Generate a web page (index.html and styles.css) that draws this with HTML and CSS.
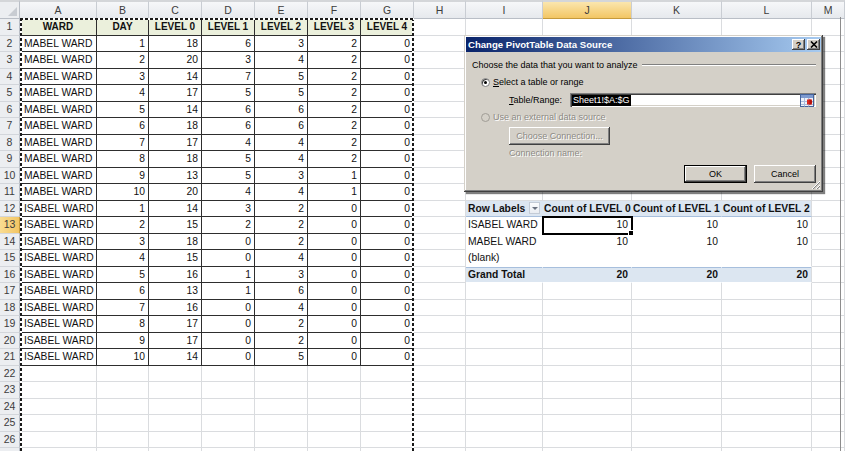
FILE: index.html
```html
<!DOCTYPE html>
<html lang="en">
<head>
    <meta charset="UTF-8">
    <title>Change PivotTable Data Source</title>
    <link rel="stylesheet" href="styles.css">
</head>
<body>
<div class="screen">
    <div class="sheet" id="sheet"></div>
    <div class="ants"></div>
    <div class="pane-edge"></div>

    <div class="dialog">
        <div class="titlebar">
            <span class="title">Change PivotTable Data Source</span>
            <span class="tb-btns">
                <span class="tb-btn">?</span>
                <span class="tb-btn">
                    <svg width="8" height="7" viewBox="0 0 8 7"><path d="M1 0.5l6 6M7 0.5l-6 6" stroke="#000" stroke-width="1.6"/></svg>
                </span>
            </span>
        </div>
        <div class="dlg-body">
            <div class="group-title"><span>Choose the data that you want to analyze</span><i class="groove"></i></div>
            <div class="radio"><span class="rb checked"></span><span><u>S</u>elect a table or range</span></div>
            <div class="range-row">
                <span class="range-label"><u>T</u>able/Range:</span>
                <div class="range-input">
                    <span class="hl">Sheet1!$A:$G</span>
                    <svg class="picker" width="14" height="13" viewBox="0 0 14 13">
                        <rect x="0.5" y="0.5" width="13" height="12" fill="#eef2fa" stroke="#44639c"/>
                        <rect x="1" y="1" width="12" height="3" fill="#7d9ad0"/>
                        <path d="M1 7.5h12M1 10.5h12M4.5 4v8.5M8.5 4v8.5" stroke="#a9bbdc"/>
                        <path d="M7 5.5h5v5h-5z" fill="#d9261f"/>
                        <path d="M9.5 4.5l3 3.5-3 3.5z" fill="#b3120d"/>
                    </svg>
                </div>
            </div>
            <div class="radio disabled"><span class="rb"></span><span>Use an external data source</span></div>
            <div class="btn btn-conn disabled">Choose Connection...</div>
            <div class="conn-name">Connection name:</div>
            <div class="actions">
                <div class="btn btn-default">OK</div>
                <div class="btn">Cancel</div>
            </div>
        </div>
        <svg class="grip" width="11" height="11" viewBox="0 0 11 11">
            <path d="M10 2L2 10M10 6L6 10M10 9L9 10" stroke="#fff" stroke-width="1"/>
            <path d="M10 3L3 10M10 7L7 10" stroke="#808080" stroke-width="1"/>
        </svg>
    </div>
</div>

<script>
    // sheet data, rows 2-21
    var cols = ['A','B','C','D','E','F','G','H','I','J','K','L','M'];
    var level0 = [18,20,14,17,14,18,17,18,13,20, 14,15,18,15,16,13,16,17,17,14];
    var level1 = [6,3,7,5,6,6,4,5,5,4, 3,2,0,0,1,1,0,0,0,0];
    var level2 = [3,4,5,5,6,6,4,4,3,4, 2,2,2,4,3,6,4,2,2,5];
    var level3 = [2,2,2,2,2,2,2,2,1,1, 0,0,0,0,0,0,0,0,0,0];

    // pivot table in I12:L16
    var pivot = {
        12: ['Row Labels', 'Count of LEVEL 0', 'Count of LEVEL 1', 'Count of LEVEL 2'],
        13: ['ISABEL WARD', 10, 10, 10],
        14: ['MABEL WARD', 10, 10, 10],
        15: ['(blank)', '', '', ''],
        16: ['Grand Total', 20, 20, 20]
    };

    var sheet = document.getElementById('sheet');

    function addCell(text, cls) {
        var el = document.createElement('div');
        el.className = cls;
        el.textContent = text;
        sheet.appendChild(el);
        return el;
    }

    function tableRow(r) {
        if (r === 1) return ['WARD', 'DAY', 'LEVEL 0', 'LEVEL 1', 'LEVEL 2', 'LEVEL 3', 'LEVEL 4'];
        var i = r - 2;
        return [i < 10 ? 'MABEL WARD' : 'ISABEL WARD', i % 10 + 1, level0[i], level1[i], level2[i], level3[i], 0];
    }

    addCell('', 'corner');
    cols.forEach(function (c) {
        addCell(c, c === 'J' ? 'col-head selected' : 'col-head');
    });

    // row 27 only peeks in at the bottom edge, so no number is drawn for it
    for (var r = 1; r <= 27; r++) {
        addCell(r < 27 ? r : '', r === 13 ? 'row-head selected' : 'row-head');
        var values = r <= 21 ? tableRow(r) : [];
        for (var c = 0; c < 13; c++) {
            var cls = 'cell';
            var text = '';
            if (c < 7 && r <= 21) {
                text = values[c];
                cls += r === 1 ? ' data head' : (c === 0 ? ' data' : ' data num');
            } else if (pivot[r] && c >= 8 && c <= 11) {
                text = pivot[r][c - 8];
                cls += ' pivot';
                if (r === 12) cls += ' pivot-head';
                else if (c > 8) cls += ' num';
                if (r === 16) cls += ' pivot-total';
            }
            var el = addCell(text, cls);
            if (r === 12 && c === 8) {
                el.className += ' row-labels';
                var btn = document.createElement('span');
                btn.className = 'filter-btn';
                el.appendChild(btn);
            }
            if (r === 13 && c === 9) el.className += ' active';
        }
    }
</script>
</body>
</html>
```

FILE: styles.css
```css
/* General */
body {
    margin: 0;
    background: #fff;
    font-family: "Liberation Sans", Arial, sans-serif;
    overflow: hidden;
}

.screen {
    position: relative;
    width: 845px;
    height: 451px;
    overflow: hidden;
}

/* Worksheet grid */
.sheet {
    display: grid;
    grid-template-columns: 20px 77px 52px 53px 53px 53px 53px 53px 52px 77px 89px 90px 90px 33px;
    grid-template-rows: 19px repeat(27, 16.5px);
}

.corner,
.col-head,
.row-head {
    box-sizing: border-box;
    color: #3c3c3c;
    font-size: 10.5px;
    text-align: center;
    background: #eceef1;
}

.corner {
    position: relative;
    border-right: 1px solid #b9bec6;
    border-bottom: 1px solid #b9bec6;
    border-top: 2px solid #d4d6d9;
}

.corner::after {
    content: "";
    position: absolute;
    right: 2px;
    bottom: 2px;
    border-left: 9px solid transparent;
    border-bottom: 9px solid #c8ccd2;
}

.col-head {
    border-top: 2px solid #d4d6d9;
    border-right: 1px solid #c9cdd3;
    border-bottom: 1px solid #b9bec6;
    line-height: 16px;
    background: linear-gradient(#f6f7f9, #e6e9ed);
}

.row-head {
    border-right: 1px solid #b9bec6;
    border-bottom: 1px solid #d3d6db;
    line-height: 15.5px;
}

.col-head.selected {
    background: linear-gradient(#fbe6ae, #f3c664);
    border-bottom-color: #c59a3c;
}

.row-head.selected {
    background: linear-gradient(90deg, #f9dc92, #f3c664);
    border-right-color: #c59a3c;
}

.cell {
    box-sizing: border-box;
    border-right: 1px solid #dadcdf;
    border-bottom: 1px solid #dadcdf;
    padding: 0 2px;
    font-size: 10.3px;
    line-height: 15.5px;
    color: #111;
    white-space: nowrap;
    overflow: hidden;
}

.cell.data {
    border-right-color: #2e2e2e;
    border-bottom-color: #2e2e2e;
    padding-left: 4px;
}

.cell.head {
    background: #ebf0dc;
    font-weight: bold;
    font-size: 10px;
    text-align: center;
    padding: 0;
}

.cell.num {
    text-align: right;
    padding-right: 3px;
}

/* Pivot table */
.cell.pivot {
    background: #fff;
    border-right-color: #fff;
    border-bottom-color: #fff;
    padding: 0 2px;
    overflow: visible;
}

.cell.pivot:nth-child(14n + 13) {
    border-right-color: #dadcdf;
}

.cell.pivot-head {
    background: #dce6f1;
    border-bottom-color: #a7bfdd;
    border-right-color: #dce6f1;
    font-weight: bold;
    font-size: 10.3px;
    padding: 0 1px;
}

.cell.pivot-total {
    background: #dce6f1;
    border-right-color: #dce6f1;
    box-shadow: inset 0 1px #a7bfdd;
    font-weight: bold;
    font-size: 10.3px;
}

.cell.pivot.num {
    padding-right: 3px;
}

.cell.row-labels {
    display: flex;
    align-items: center;
    justify-content: space-between;
    font-size: 10.3px;
    padding: 0 2px;
}

.filter-btn {
    position: relative;
    width: 11px;
    height: 12px;
    box-sizing: border-box;
    border: 1px solid #c3cbd6;
    background: linear-gradient(#fbfcfd, #e9edf2);
}

.filter-btn::after {
    content: "";
    position: absolute;
    left: 2px;
    top: 4px;
    border-left: 3px solid transparent;
    border-right: 3px solid transparent;
    border-top: 3px solid #6b7280;
}

.cell.active {
    position: relative;
    outline: 2px solid #000;
    outline-offset: -1px;
    overflow: visible;
    z-index: 1;
}

.cell.active::after {
    content: "";
    position: absolute;
    right: -3px;
    bottom: -3px;
    width: 4px;
    height: 4px;
    background: #000;
    border: 1px solid #fff;
}

/* Copy marquee round A:G */
.ants {
    position: absolute;
    left: 20px;
    top: 18px;
    width: 394px;
    height: 460px;
    pointer-events: none;
    background:
        repeating-linear-gradient(90deg, #1a1a1a 0 3px, #fff 3px 5px) top / 100% 2px no-repeat,
        repeating-linear-gradient(180deg, #1a1a1a 0 3px, #fff 3px 5px) left / 2px 100% no-repeat,
        repeating-linear-gradient(180deg, #1a1a1a 0 3px, #fff 3px 5px) right / 2px 100% no-repeat;
}

.pane-edge {
    position: absolute;
    left: 840px;
    top: 17px;
    bottom: 0;
    width: 1px;
    background: #8c8c8c;
}

/* Dialog (classic window) */
.dialog {
    position: absolute;
    left: 464px;
    top: 35px;
    width: 359px;
    height: 157px;
    box-sizing: border-box;
    padding: 2px;
    background: #d4d0c8;
    color: #000;
    font-size: 9px;
    box-shadow:
        inset -1px -1px #404040,
        inset 1px 1px #d4d0c8,
        inset -2px -2px #808080,
        inset 2px 2px #fff,
        2px 2px 1px rgba(0, 0, 0, 0.5);
}

.titlebar {
    height: 15px;
    display: flex;
    align-items: center;
    justify-content: space-between;
    padding: 0 1px 0 2px;
    background: linear-gradient(to right, #0a246a, #a6caf0);
    color: #fff;
    font-weight: bold;
    font-size: 9.6px;
}

.tb-btns {
    display: flex;
    gap: 2px;
}

.tb-btn {
    width: 13px;
    height: 11px;
    display: flex;
    align-items: center;
    justify-content: center;
    background: #d4d0c8;
    color: #000;
    font-size: 9px;
    box-shadow: inset -1px -1px #404040, inset 1px 1px #fff, inset -2px -2px #808080;
}

.dlg-body {
    padding: 0 5px 0 6px;
}

.group-title {
    display: flex;
    align-items: center;
    height: 12px;
    margin-top: 7px;
}

.groove {
    flex: 1;
    margin-left: 4px;
    height: 0;
    border-top: 1px solid #808080;
    border-bottom: 1px solid #fff;
}

.radio {
    display: flex;
    align-items: center;
    gap: 3px;
    height: 12px;
    margin: 5px 0 0 9px;
}

.radio.disabled {
    margin-top: 4px;
}

.rb {
    width: 9px;
    height: 9px;
    box-sizing: border-box;
    border-radius: 50%;
    background: #fff;
    border: 1px solid #808080;
    box-shadow: inset 1px 1px #404040;
    position: relative;
}

.rb.checked::after {
    content: "";
    position: absolute;
    left: 2px;
    top: 2px;
    width: 3px;
    height: 3px;
    border-radius: 50%;
    background: #000;
}

.disabled {
    color: #8c8a84;
    text-shadow: 1px 1px #fff;
}

.radio.disabled .rb {
    background: #d4d0c8;
    border-color: #a09d96;
    box-shadow: none;
}

.range-row {
    display: flex;
    align-items: center;
    height: 14px;
    margin: 5px 0 0 37px;
}

.range-label {
    width: 61px;
}

.range-input {
    width: 246px;
    height: 14px;
    box-sizing: border-box;
    padding: 2px 2px 1px 2px;
    display: flex;
    align-items: center;
    justify-content: space-between;
    background: #fff;
    box-shadow: inset 1px 1px #808080, inset 2px 2px #404040, inset -1px -1px #fff, inset -2px -2px #d4d0c8;
}

.hl {
    background: #000;
    color: #fff;
    line-height: 11px;
    padding: 0 1px;
}

.btn {
    height: 18px;
    box-sizing: border-box;
    display: flex;
    align-items: center;
    justify-content: center;
    background: #d4d0c8;
    box-shadow: inset -1px -1px #404040, inset 1px 1px #fff, inset -2px -2px #808080;
}

.btn-conn {
    width: 101px;
    margin: 4px 0 0 37px;
}

.conn-name {
    height: 12px;
    line-height: 12px;
    margin: 2px 0 0 37px;
    color: #8c8a84;
    text-shadow: 1px 1px #fff;
}

.actions {
    display: flex;
    justify-content: flex-end;
    gap: 7px;
    margin-top: 6px;
}

.actions .btn {
    width: 62px;
}

.actions .btn-default {
    width: 63px;
    border: 1px solid #000;
}

.grip {
    position: absolute;
    right: 2px;
    bottom: 2px;
}
```
